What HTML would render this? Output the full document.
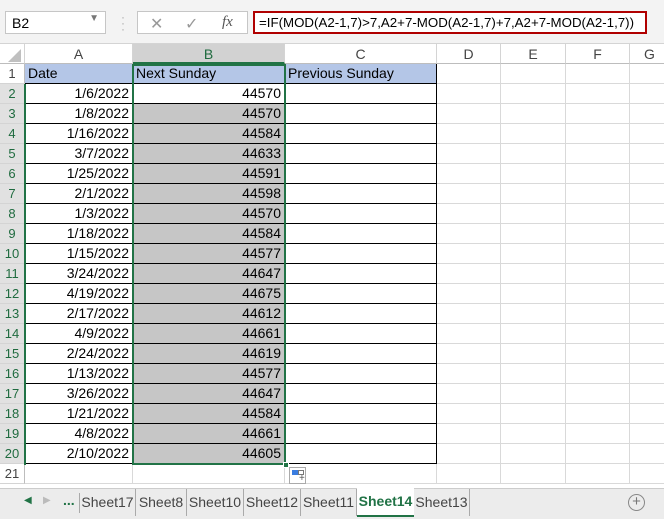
<!DOCTYPE html>
<html><head><style>
*{box-sizing:border-box;margin:0;padding:0}
body{width:664px;height:519px;overflow:hidden;background:#fff;font-family:"Liberation Sans",Calibri,sans-serif;font-size:14px;color:#000;position:relative}
.abs{position:absolute}
.top{left:0;top:0;width:664px;height:44px;background:#f3f3f3;border-bottom:1px solid #d4d4d4}
.nb{left:5px;top:11px;width:101px;height:23px;background:#fff;border:1px solid #c6c6c6;font-size:14px;padding:3px 6px}
.fx{left:137px;top:11px;width:111px;height:23px;background:#fff;border:1px solid #c6c6c6;color:#999}
.fb{left:253px;top:11px;width:394px;height:23px;background:#fff;border:2px solid #b00000;font-size:13.3px;padding:2px 4px;white-space:nowrap;overflow:hidden}
.ch{top:44px;height:20px;background:#fff;border-right:1px solid #d4d4d4;border-bottom:1px solid #bdbdbd;text-align:center;line-height:20px;color:#444;font-size:14px}
.rh{left:0;width:25px;height:20px;border-bottom:1px solid #d4d4d4;border-right:1px solid #bdbdbd;text-align:center;line-height:20px;font-size:13px;color:#1f6b3f;background:#e1e1e1}
.c{height:20px;line-height:19px;padding:0 3px;white-space:nowrap;border-bottom:1px solid #000;border-right:1px solid #000}
.g{height:20px;border-bottom:1px solid #d9d9d9;border-right:1px solid #d9d9d9}
.tabs{left:0;top:488px;width:664px;height:31px;background:#ececec;border-top:1px solid #ccc}
.tab{top:0;height:27px;line-height:27px;font-size:14px;color:#444;text-align:center;border-right:1px solid #aaa}
</style></head><body>
<div class="abs top"></div>
<div class="abs nb">B2<span style="position:absolute;right:6px;top:1px;color:#777;font-size:10px">▼</span></div>
<div class="abs" style="left:121px;top:14px;color:#aaa;font-size:12px;line-height:6px">·<br>·<br>·</div>
<div class="abs fx"><span class="abs" style="left:12px;top:2px;font-size:16px">✕</span><span class="abs" style="left:47px;top:2px;font-size:16px">✓</span><span class="abs" style="left:84px;top:2px;font-style:italic;font-family:'Liberation Serif',serif;color:#555;font-size:15px">fx</span></div>
<div class="abs fb">=IF(MOD(A2-1,7)&gt;7,A2+7-MOD(A2-1,7)+7,A2+7-MOD(A2-1,7))</div>
<div class="abs ch" style="left:0;width:25px"></div>
<div class="abs" style="left:8px;top:49px;width:0;height:0;border-left:13px solid transparent;border-bottom:13px solid #c0c0c0"></div>
<div class="abs ch" style="left:25px;width:108px">A</div>
<div class="abs ch" style="left:133px;width:152px;background:#d2d2d2;color:#1f6b3f;border-bottom:2px solid #217346">B</div>
<div class="abs ch" style="left:285px;width:152px">C</div>
<div class="abs ch" style="left:437px;width:64px">D</div>
<div class="abs ch" style="left:501px;width:65px">E</div>
<div class="abs ch" style="left:566px;width:64px">F</div>
<div class="abs ch" style="left:630px;width:40px">G</div>
<div id="grid"></div>
<div class="abs rh" style="top:64px;background:#fff;color:#444">1</div>
<div class="abs c" style="left:25px;top:64px;width:108px;background:#b4c6e7">Date</div>
<div class="abs c" style="left:133px;top:64px;width:152px;background:#b4c6e7">Next Sunday</div>
<div class="abs c" style="left:285px;top:64px;width:152px;background:#b4c6e7">Previous Sunday</div>
<div class="abs g" style="left:437px;top:64px;width:64px"></div><div class="abs g" style="left:501px;top:64px;width:65px"></div><div class="abs g" style="left:566px;top:64px;width:64px"></div><div class="abs g" style="left:630px;top:64px;width:40px"></div>
<script>
var d=[["1/6/2022",44570],["1/8/2022",44570],["1/16/2022",44584],["3/7/2022",44633],["1/25/2022",44591],["2/1/2022",44598],["1/3/2022",44570],["1/18/2022",44584],["1/15/2022",44577],["3/24/2022",44647],["4/19/2022",44675],["2/17/2022",44612],["4/9/2022",44661],["2/24/2022",44619],["1/13/2022",44577],["3/26/2022",44647],["1/21/2022",44584],["4/8/2022",44661],["2/10/2022",44605]];
var h="";
for(var i=0;i<d.length;i++){var t=84+20*i;
h+='<div class="abs rh" style="top:'+t+'px">'+(i+2)+'</div>';
h+='<div class="abs c" style="left:25px;top:'+t+'px;width:108px;text-align:right">'+d[i][0]+'</div>';
h+='<div class="abs c" style="left:133px;top:'+t+'px;width:152px;text-align:right;background:'+(i==0?'#fff':'#c6c6c6')+'">'+d[i][1]+'</div>';
h+='<div class="abs c" style="left:285px;top:'+t+'px;width:152px"></div>';
h+='<div class="abs g" style="left:437px;top:'+t+'px;width:64px"></div><div class="abs g" style="left:501px;top:'+t+'px;width:65px"></div><div class="abs g" style="left:566px;top:'+t+'px;width:64px"></div><div class="abs g" style="left:630px;top:'+t+'px;width:40px"></div>';}
h+='<div class="abs rh" style="top:464px;background:#fff;color:#444">21</div>';
[[25,108],[133,152],[285,152],[437,64],[501,65],[566,64],[630,40]].forEach(function(c){h+='<div class="abs g" style="left:'+c[0]+'px;top:464px;width:'+c[1]+'px"></div>';});
h+='<div class="abs" style="left:0;top:484px;width:664px;height:4px;background:#fff"></div>';
document.getElementById("grid").outerHTML=h;
</script>
<div class="abs" style="left:24px;top:84px;width:2px;height:381px;background:#217346"></div>
<div class="abs" style="left:132px;top:64px;width:154px;height:401px;border:2px solid #217346"></div>
<div class="abs" style="left:283px;top:462px;width:6px;height:6px;background:#217346;border:1px solid #fff"></div>
<div class="abs" style="left:289px;top:467px;width:17px;height:17px;border:1px solid #aaa;background:#fff"><div class="abs" style="left:2px;top:2px;width:6px;height:5px;background:#3a7de0"></div><div class="abs" style="left:8px;top:2px;width:6px;height:5px;border:1px solid #777"></div><span class="abs" style="left:9px;top:5px;font-size:10px;color:#555">+</span></div>
<div class="abs tabs">
<span class="abs" style="left:24px;top:6px;color:#217346;font-size:10px">◀</span>
<span class="abs" style="left:43px;top:6px;color:#bbb;font-size:10px">▶</span>
<span class="abs" style="left:63px;top:3px;color:#217346;font-weight:bold">...</span>
<div class="abs" style="left:79px;top:4px;width:1px;height:20px;background:#aaa"></div>
<div class="abs tab" style="left:80px;width:56px">Sheet17</div>
<div class="abs tab" style="left:136px;width:51px">Sheet8</div>
<div class="abs tab" style="left:187px;width:57px">Sheet10</div>
<div class="abs tab" style="left:244px;width:57px">Sheet12</div>
<div class="abs tab" style="left:301px;width:56px">Sheet11</div>
<div class="abs" style="left:357px;top:-1px;width:57px;height:29px;background:#fff;border-bottom:2px solid #217346;text-align:center;line-height:27px;color:#217346;font-weight:bold">Sheet14</div>
<div class="abs tab" style="left:414px;width:56px">Sheet13</div>
<div class="abs" style="left:628px;top:5px;width:17px;height:17px;border:1.5px solid #888;border-radius:50%;text-align:center;line-height:14px;color:#777;font-size:15px">+</div>
</div>
</body></html>
